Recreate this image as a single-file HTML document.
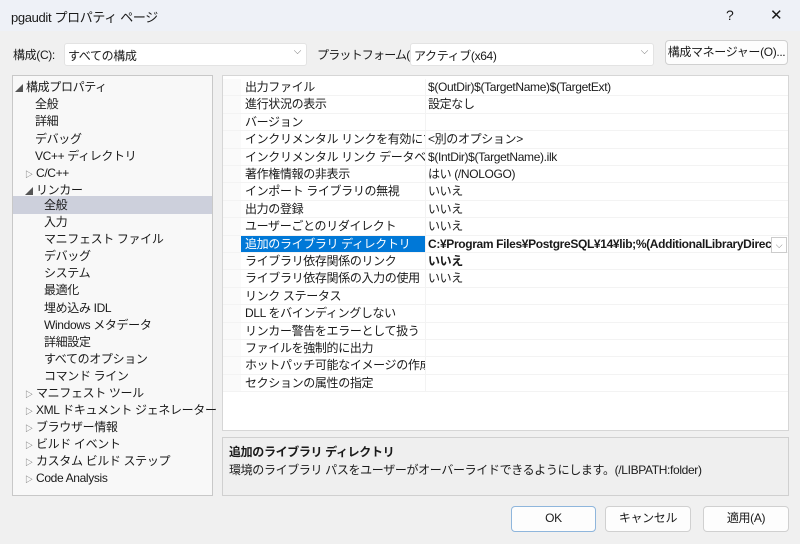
<!DOCTYPE html>
<html><head><meta charset="utf-8"><style>
*{margin:0;padding:0;box-sizing:border-box}
body{width:800px;height:544px;background:#f0f0f0;font-family:"Liberation Sans","Noto Sans CJK JP",sans-serif;font-size:12px;letter-spacing:-0.35px;color:#1a1a1a;position:relative;overflow:hidden}
.a{position:absolute;white-space:nowrap}
.title{left:0;top:0;width:800px;height:31px;background:#eef1f7}
.combo{background:#fff;border:1px solid #e3e3e3;border-radius:3px;height:23px}
.btn{background:#fdfdfd;border:1px solid #d0d0d0;border-radius:4px;text-align:center;line-height:23px}
.tree{left:12px;top:75px;width:201px;height:421px;background:#f8f8f8;border:1px solid #c8c8c8}
.tr{position:absolute;height:17px;line-height:17px;white-space:nowrap}
.grid{left:222px;top:75px;width:567px;height:356px;background:#fff;border:1px solid #d6d6d6}
.row{position:absolute;left:0;width:565px;height:17.4px;border-bottom:1px solid #f3f3f3}
.row .g{position:absolute;left:0;top:0;width:18px;height:100%;background:#fafafa}
.row .n{position:absolute;left:18px;width:185px;top:0;height:100%;padding-left:4px;line-height:16px;overflow:hidden;border-right:1px solid #f3f3f3}
.row .v{position:absolute;left:203px;top:0;height:100%;padding-left:2px;line-height:16px}
.desc{left:222px;top:437px;width:567px;height:59px;background:#efefef;border:1px solid #d0d0d0}
.tri{font-size:8px;color:#555;display:inline-block;width:11px}
</style></head><body>
<div class="a title"></div>
<div class="a" style="left:11px;top:7px;font-size:13px">pgaudit プロパティ ページ</div>
<div class="a" style="left:726px;top:7px;font-size:14px">?</div>
<div class="a" style="left:770px;top:6px;font-size:15px">✕</div>

<div class="a" style="left:13px;top:46px">構成(C):</div>
<div class="a combo" style="left:64px;top:43px;width:243px"><span style="position:absolute;left:3px;top:3px">すべての構成</span><span style="position:absolute;right:5px;top:2px;font-size:10px;color:#777">⌵</span></div>
<div class="a" style="left:317px;top:46px;letter-spacing:-0.8px">プラットフォーム(P):</div>
<div class="a combo" style="left:410px;top:43px;width:244px"><span style="position:absolute;left:3px;top:3px">アクティブ(x64)</span><span style="position:absolute;right:5px;top:2px;font-size:10px;color:#777">⌵</span></div>
<div class="a btn" style="left:665px;top:40px;width:123px;height:25px">構成マネージャー(O)...</div>

<div class="a tree">
<div class="tr" style="left:2px;top:3px"><span class="tri">◢</span>構成プロパティ</div>
<div class="tr" style="left:22px;top:20px">全般</div>
<div class="tr" style="left:22px;top:37px">詳細</div>
<div class="tr" style="left:22px;top:55px">デバッグ</div>
<div class="tr" style="left:22px;top:72px">VC++ ディレクトリ</div>
<div class="tr" style="left:12px;top:89px"><span class="tri">▷</span>C/C++</div>
<div class="tr" style="left:12px;top:106px"><span class="tri">◢</span>リンカー</div>
<div class="tr" style="left:0;top:120px;width:199px;height:18px;background:#cdd0dc"></div>
<div class="tr" style="left:31px;top:121px">全般</div>
<div class="tr" style="left:31px;top:138px">入力</div>
<div class="tr" style="left:31px;top:155px">マニフェスト ファイル</div>
<div class="tr" style="left:31px;top:172px">デバッグ</div>
<div class="tr" style="left:31px;top:189px">システム</div>
<div class="tr" style="left:31px;top:206px">最適化</div>
<div class="tr" style="left:31px;top:224px">埋め込み IDL</div>
<div class="tr" style="left:31px;top:241px">Windows メタデータ</div>
<div class="tr" style="left:31px;top:258px">詳細設定</div>
<div class="tr" style="left:31px;top:275px">すべてのオプション</div>
<div class="tr" style="left:31px;top:292px">コマンド ライン</div>
<div class="tr" style="left:12px;top:309px"><span class="tri">▷</span>マニフェスト ツール</div>
<div class="tr" style="left:12px;top:326px"><span class="tri">▷</span>XML ドキュメント ジェネレーター</div>
<div class="tr" style="left:12px;top:343px"><span class="tri">▷</span>ブラウザー情報</div>
<div class="tr" style="left:12px;top:360px"><span class="tri">▷</span>ビルド イベント</div>
<div class="tr" style="left:12px;top:377px"><span class="tri">▷</span>カスタム ビルド ステップ</div>
<div class="tr" style="left:12px;top:394px"><span class="tri">▷</span>Code Analysis</div>
</div>

<div class="a grid">
<div class="row" style="top:3px"><div class="g"></div><div class="n">出力ファイル</div><div class="v">$(OutDir)$(TargetName)$(TargetExt)</div></div>
<div class="row" style="top:20.4px"><div class="g"></div><div class="n">進行状況の表示</div><div class="v">設定なし</div></div>
<div class="row" style="top:37.8px"><div class="g"></div><div class="n">バージョン</div><div class="v"></div></div>
<div class="row" style="top:55.2px"><div class="g"></div><div class="n">インクリメンタル リンクを有効にする</div><div class="v">&lt;別のオプション&gt;</div></div>
<div class="row" style="top:72.6px"><div class="g"></div><div class="n">インクリメンタル リンク データベース ファイル</div><div class="v">$(IntDir)$(TargetName).ilk</div></div>
<div class="row" style="top:90px"><div class="g"></div><div class="n">著作権情報の非表示</div><div class="v">はい (/NOLOGO)</div></div>
<div class="row" style="top:107.4px"><div class="g"></div><div class="n">インポート ライブラリの無視</div><div class="v">いいえ</div></div>
<div class="row" style="top:124.8px"><div class="g"></div><div class="n">出力の登録</div><div class="v">いいえ</div></div>
<div class="row" style="top:142.2px"><div class="g"></div><div class="n">ユーザーごとのリダイレクト</div><div class="v">いいえ</div></div>
<div class="row" style="top:159.6px"><div class="g"></div><div class="n" style="background:#0078d7;color:#fff">追加のライブラリ ディレクトリ</div><div class="v" style="font-weight:bold;width:345px;overflow:hidden">C:¥Program Files¥PostgreSQL¥14¥lib;%(AdditionalLibraryDirectories)</div><div style="position:absolute;left:548px;top:1px;width:16px;height:16px;border:1px solid #ccc;background:#fff;font-size:9px;text-align:center;color:#777;line-height:14px">⌵</div></div>
<div class="row" style="top:177px"><div class="g"></div><div class="n">ライブラリ依存関係のリンク</div><div class="v" style="font-weight:bold">いいえ</div></div>
<div class="row" style="top:194.4px"><div class="g"></div><div class="n">ライブラリ依存関係の入力の使用</div><div class="v">いいえ</div></div>
<div class="row" style="top:211.8px"><div class="g"></div><div class="n">リンク ステータス</div><div class="v"></div></div>
<div class="row" style="top:229.2px"><div class="g"></div><div class="n">DLL をバインディングしない</div><div class="v"></div></div>
<div class="row" style="top:246.6px"><div class="g"></div><div class="n">リンカー警告をエラーとして扱う</div><div class="v"></div></div>
<div class="row" style="top:264px"><div class="g"></div><div class="n">ファイルを強制的に出力</div><div class="v"></div></div>
<div class="row" style="top:281.4px"><div class="g"></div><div class="n">ホットパッチ可能なイメージの作成</div><div class="v"></div></div>
<div class="row" style="top:298.8px"><div class="g"></div><div class="n">セクションの属性の指定</div><div class="v"></div></div>
</div>

<div class="a desc">
<div class="a" style="left:6px;top:5px;font-weight:bold">追加のライブラリ ディレクトリ</div>
<div class="a" style="left:6px;top:23px">環境のライブラリ パスをユーザーがオーバーライドできるようにします。(/LIBPATH:folder)</div>
</div>

<div class="a btn" style="left:511px;top:506px;width:85px;height:26px;border-color:#8fb6dc">OK</div>
<div class="a btn" style="left:605px;top:506px;width:86px;height:26px">キャンセル</div>
<div class="a btn" style="left:703px;top:506px;width:86px;height:26px">適用(A)</div>
</body></html>
